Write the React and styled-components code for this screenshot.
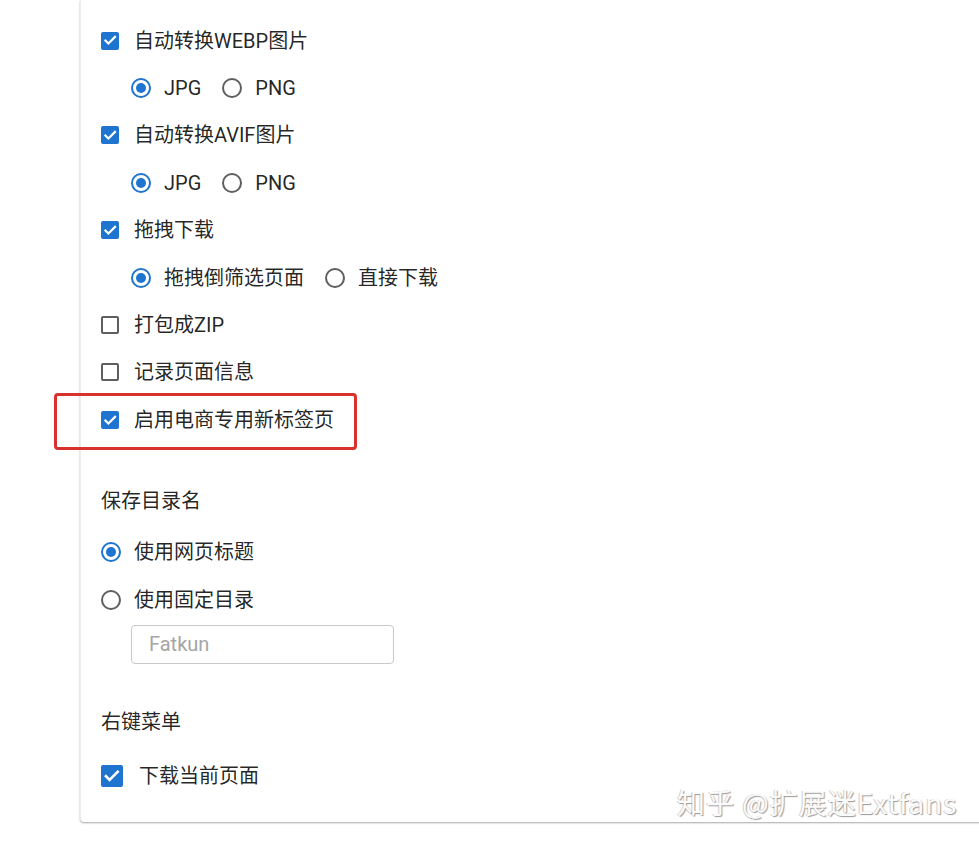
import styled, { createGlobalStyle } from 'styled-components';

const GlobalStyle = createGlobalStyle`
  html, body {
    margin: 0;
    padding: 0;
    background: #ffffff;
  }
  body {
    font-family: Roboto, 'Noto Sans CJK SC', sans-serif;
    color: rgba(0, 0, 0, 0.87);
  }
`;

const BLUE = '#1f74cf';

const Page = styled.div`
  position: relative;
  width: 979px;
  height: 845px;
  overflow: hidden;
  padding-left: 80px;
  box-sizing: border-box;
`;

const Card = styled.div`
  width: 1000px;
  box-sizing: border-box;
  padding: 17px 0 22px 20px;
  background: #fff;
  border-left: 1px solid #ececec;
  border-bottom-left-radius: 4px;
  box-shadow: 0 1px 2px rgba(0, 0, 0, 0.35);
`;

const OptionList = styled.div`
  display: flex;
  flex-direction: column;
`;

const Row = styled.label`
  position: relative;
  display: flex;
  align-items: center;
  height: ${({ $h }) => $h || 47.4}px;
  padding-left: ${({ $indent }) => $indent || 0}px;
  font-size: 20px;
  line-height: 28px;
  cursor: pointer;
`;

const Highlight = styled.span`
  position: absolute;
  left: -47px;
  top: -3px;
  width: 303px;
  height: 57px;
  box-sizing: border-box;
  border: 3px solid #d8322c;
  border-radius: 4px;
  pointer-events: none;
`;

const Box = styled.span`
  display: inline-flex;
  align-items: center;
  justify-content: center;
  box-sizing: border-box;
  width: ${({ $size }) => $size}px;
  height: ${({ $size }) => $size}px;
  margin-right: ${({ $gap }) => $gap}px;
  border-radius: 2px;
  background: ${({ $checked }) => ($checked ? BLUE : '#fff')};
  border: ${({ $checked }) => ($checked ? 'none' : '2px solid #5f5f5f')};
  flex: 0 0 auto;
`;

const Circle = styled.span`
  display: inline-flex;
  align-items: center;
  justify-content: center;
  box-sizing: border-box;
  width: 20px;
  height: 20px;
  margin-right: 13px;
  border-radius: 50%;
  border: 2px solid ${({ $checked }) => ($checked ? BLUE : '#5f5f5f')};
  flex: 0 0 auto;

  &::after {
    content: '';
    display: ${({ $checked }) => ($checked ? 'block' : 'none')};
    width: 10px;
    height: 10px;
    border-radius: 50%;
    background: ${BLUE};
  }
`;

const RadioGroup = styled.div`
  display: flex;
  align-items: center;
  gap: 21px;
`;

const RadioItem = styled.span`
  display: inline-flex;
  align-items: center;
`;

const Heading = styled.div`
  font-size: 20px;
  line-height: 28px;
  margin-top: ${({ $top }) => $top}px;
  margin-bottom: ${({ $bottom }) => $bottom}px;
`;

const TextInput = styled.input`
  display: block;
  width: 263px;
  height: 39px;
  margin: 1px 0 0 30px;
  box-sizing: border-box;
  padding: 0 17px;
  border: 1px solid #c9c9c9;
  border-radius: 4px;
  font-family: Roboto, 'Noto Sans CJK SC', sans-serif;
  font-size: 20px;
  color: #333;
  outline: none;

  &::placeholder {
    color: #a5a5a5;
  }
`;

const Watermark = styled.div`
  position: absolute;
  left: 677px;
  top: 784px;
  font-family: 'Noto Sans CJK SC', sans-serif;
  font-size: 28px;
  line-height: 36px;
  color: #fbfbfb;
  text-shadow: 1px 1px 1px #9a9a9a, -1px 0 0 #d0d0d0;
  letter-spacing: 1px;
  white-space: nowrap;
`;

const Check = ({ size = 18 }) => (
  <svg width={size * 0.8} height={size * 0.8} viewBox="0 0 24 24">
    <path d="M4 12.5l5 5L20 6.5" fill="none" stroke="#fff" strokeWidth="3.6" strokeLinecap="square" />
  </svg>
);

const Checkbox = ({ checked, size = 18, gap = 15, children, ...rest }) => (
  <Row {...rest}>
    <Box $checked={checked} $size={size} $gap={gap}>
      {checked ? <Check size={size} /> : null}
    </Box>
    {children}
  </Row>
);

const Radio = ({ checked, children }) => (
  <RadioItem>
    <Circle $checked={checked} />
    {children}
  </RadioItem>
);

const App = () => (
  <Page>
    <GlobalStyle />
    <Card>
      <OptionList>
        <Checkbox checked>自动转换WEBP图片</Checkbox>
        <Row $indent={30}>
          <RadioGroup>
            <Radio checked>JPG</Radio>
            <Radio>PNG</Radio>
          </RadioGroup>
        </Row>
        <Checkbox checked>自动转换AVIF图片</Checkbox>
        <Row $indent={30}>
          <RadioGroup>
            <Radio checked>JPG</Radio>
            <Radio>PNG</Radio>
          </RadioGroup>
        </Row>
        <Checkbox checked>拖拽下载</Checkbox>
        <Row $indent={30}>
          <RadioGroup>
            <Radio checked>拖拽倒筛选页面</Radio>
            <Radio>直接下载</Radio>
          </RadioGroup>
        </Row>
        <Checkbox>打包成ZIP</Checkbox>
        <Checkbox>记录页面信息</Checkbox>
        <Checkbox checked>
          启用电商专用新标签页
          <Highlight />
        </Checkbox>
      </OptionList>

      <Heading $top={43} $bottom={13}>保存目录名</Heading>
      <Row $h={48}>
        <Radio checked>使用网页标题</Radio>
      </Row>
      <Row $h={48}>
        <Radio>使用固定目录</Radio>
      </Row>
      <TextInput placeholder="Fatkun" />

      <Heading $top={44} $bottom={16}>右键菜单</Heading>
      <Checkbox checked size={22} gap={16} $h={48}>
        下载当前页面
      </Checkbox>
    </Card>
    <Watermark>知乎 @扩展迷Extfans</Watermark>
  </Page>
);

export default App;
